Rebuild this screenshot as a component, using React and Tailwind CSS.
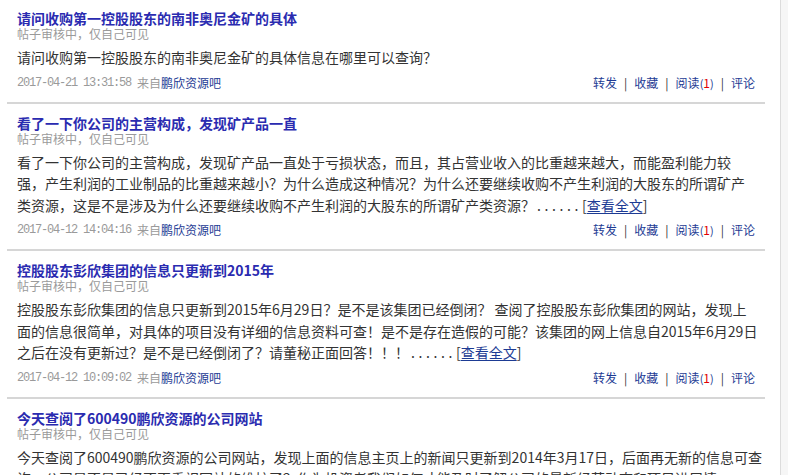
import React from 'react';

const posts = [
    {
        title: '请问收购第一控股股东的南非奥尼金矿的具体',
        lines: ['请问收购第一控股股东的南非奥尼金矿的具体信息在哪里可以查询？'],
        more: false,
        time: '2017-04-21 13:31:58',
    },
    {
        title: '看了一下你公司的主营构成，发现矿产品一直',
        lines: [
            '看了一下你公司的主营构成，发现矿产品一直处于亏损状态，而且，其占营业收入的比重越来越大，而能盈利能力较',
            '强，产生利润的工业制品的比重越来越小？为什么造成这种情况？为什么还要继续收购不产生利润的大股东的所谓矿产',
            '类资源，这是不是涉及为什么还要继续收购不产生利润的大股东的所谓矿产类资源？',
        ],
        more: true,
        time: '2017-04-12 14:04:16',
    },
    {
        title: '控股股东彭欣集团的信息只更新到2015年',
        lines: [
            '控股股东彭欣集团的信息只更新到2015年6月29日？是不是该集团已经倒闭？ 查阅了控股股东彭欣集团的网站，发现上',
            '面的信息很简单，对具体的项目没有详细的信息资料可查！是不是存在造假的可能？该集团的网上信息自2015年6月29日',
            '之后在没有更新过？是不是已经倒闭了？请董秘正面回答！！！',
        ],
        more: true,
        time: '2017-04-12 10:09:02',
    },
    {
        title: '今天查阅了600490鹏欣资源的公司网站',
        lines: [
            '今天查阅了600490鹏欣资源的公司网站，发现上面的信息主页上的新闻只更新到2014年3月17日，后面再无新的信息可查',
            '询，公司是不是已经不再重视网站的维护了？作为投资者我们如何才能及时了解公司的最新经营动态和项目进展情',
            '况？',
        ],
        more: true,
        time: '2017-04-11 16:22:35',
    },
];

const Actions = () => (
    <div className="flex items-center text-[#1d3b94]">
        <span>转发</span>
        <span className="px-[7px] text-[#333]">|</span>
        <span>收藏</span>
        <span className="px-[7px] text-[#333]">|</span>
        <span>阅读<span className="text-[11px]">(</span><span className="text-[#e10000]">1</span><span className="text-[11px]">)</span></span>
        <span className="px-[7px] text-[#333]">|</span>
        <span>评论</span>
    </div>
);

const Post = ({ post, first }) => (
    <div className={`${first ? 'pt-[10px]' : 'pt-[11px]'} pb-[11px] px-[10px] border-b-2 border-[#d6d6d6]`}>
        <div className="text-[14px] leading-[17px] font-bold text-[#2a2bb0]">{post.title}</div>
        <div className="text-[12px] leading-[13px] text-[#9a9a9a]">帖子审核中，仅自己可见</div>
        <div className="mt-[7px] text-[14px] leading-[21.5px] text-[#333]">
            {post.lines.map((line, i) => (
                <div key={i} className="whitespace-nowrap">
                    {line}
                    {post.more && i === post.lines.length - 1 && (
                        <>
                            <span className="tracking-[3.6px] ml-[2px]">......</span>
                            <span>[</span>
                            <span className="text-[#1d3b94] underline underline-offset-2">查看全文</span>
                            <span>]</span>
                        </>
                    )}
                </div>
            ))}
        </div>
        <div className="mt-[6px] flex items-center justify-between text-[12px] leading-[16px]">
            <div className="flex items-center">
                <span className="font-['Liberation_Mono',monospace] tracking-[-1.2px] text-[#9a9a9a]">{post.time}</span>
                <span className="ml-[6px] text-[#9a9a9a]">来自</span>
                <span className="text-[#1d3b94]">鹏欣资源吧</span>
            </div>
            <Actions />
        </div>
    </div>
);

export default function App() {
    return (
        <div className="w-[788px] h-[475px] overflow-hidden bg-[#f6f6f6] font-['Noto_Sans_CJK_SC',sans-serif]">
            <div className="w-[781px] h-full bg-white border-r border-[#dcdcdc]">
                <div className="ml-[7px] w-[758px]">
                    {posts.map((post, i) => (
                        <Post key={i} post={post} first={i === 0} />
                    ))}
                </div>
            </div>
        </div>
    );
}
